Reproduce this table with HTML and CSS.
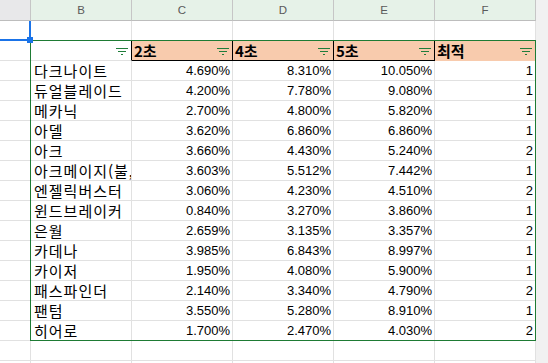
FILE: index.html
```
<!DOCTYPE html>
<html lang="ko">
<head>
<meta charset="utf-8">
<link rel="stylesheet" href="styles.css">
</head>
<body>
<div class="sheet">
  <div class="grid">
    <div class="c ch corner"></div>
    <div class="c ch">B</div>
    <div class="c ch">C</div>
    <div class="c ch">D</div>
    <div class="c ch">E</div>
    <div class="c ch">F</div>
    <div class="c strip"></div>

    <div class="c"></div><div class="c"></div><div class="c"></div><div class="c"></div><div class="c"></div><div class="c"></div><div class="c strip"></div>

    <div class="c"></div>
    <div class="c hd hb"><span></span><svg class="flt" width="12" height="7" viewBox="0 0 12 7"><rect x="0" y="0" width="12" height="1"/><rect x="2" y="3" width="8" height="1"/><rect x="5" y="6" width="2" height="1"/></svg></div>
    <div class="c hd hp"><span>2초</span><svg class="flt" width="12" height="7" viewBox="0 0 12 7"><rect x="0" y="0" width="12" height="1"/><rect x="2" y="3" width="8" height="1"/><rect x="5" y="6" width="2" height="1"/></svg></div>
    <div class="c hd hp"><span>4초</span><svg class="flt" width="12" height="7" viewBox="0 0 12 7"><rect x="0" y="0" width="12" height="1"/><rect x="2" y="3" width="8" height="1"/><rect x="5" y="6" width="2" height="1"/></svg></div>
    <div class="c hd hp"><span>5초</span><svg class="flt" width="12" height="7" viewBox="0 0 12 7"><rect x="0" y="0" width="12" height="1"/><rect x="2" y="3" width="8" height="1"/><rect x="5" y="6" width="2" height="1"/></svg></div>
    <div class="c hd hf"><span>최적</span><svg class="flt" width="12" height="7" viewBox="0 0 12 7"><rect x="0" y="0" width="12" height="1"/><rect x="2" y="3" width="8" height="1"/><rect x="5" y="6" width="2" height="1"/></svg></div>
    <div class="c strip"></div>

    <div class="c"></div><div class="c nm">다크나이트</div><div class="c n">4.690%</div><div class="c n">8.310%</div><div class="c n">10.050%</div><div class="c n">1</div><div class="c strip"></div>
    <div class="c"></div><div class="c nm">듀얼블레이드</div><div class="c n">4.200%</div><div class="c n">7.780%</div><div class="c n">9.080%</div><div class="c n">1</div><div class="c strip"></div>
    <div class="c"></div><div class="c nm">메카닉</div><div class="c n">2.700%</div><div class="c n">4.800%</div><div class="c n">5.820%</div><div class="c n">1</div><div class="c strip"></div>
    <div class="c"></div><div class="c nm">아델</div><div class="c n">3.620%</div><div class="c n">6.860%</div><div class="c n">6.860%</div><div class="c n">1</div><div class="c strip"></div>
    <div class="c"></div><div class="c nm">아크</div><div class="c n">3.660%</div><div class="c n">4.430%</div><div class="c n">5.240%</div><div class="c n">2</div><div class="c strip"></div>
    <div class="c"></div><div class="c nm">아크메이지(불,</div><div class="c n">3.603%</div><div class="c n">5.512%</div><div class="c n">7.442%</div><div class="c n">1</div><div class="c strip"></div>
    <div class="c"></div><div class="c nm">엔젤릭버스터</div><div class="c n">3.060%</div><div class="c n">4.230%</div><div class="c n">4.510%</div><div class="c n">2</div><div class="c strip"></div>
    <div class="c"></div><div class="c nm">윈드브레이커</div><div class="c n">0.840%</div><div class="c n">3.270%</div><div class="c n">3.860%</div><div class="c n">1</div><div class="c strip"></div>
    <div class="c"></div><div class="c nm">은월</div><div class="c n">2.659%</div><div class="c n">3.135%</div><div class="c n">3.357%</div><div class="c n">2</div><div class="c strip"></div>
    <div class="c"></div><div class="c nm">카데나</div><div class="c n">3.985%</div><div class="c n">6.843%</div><div class="c n">8.997%</div><div class="c n">1</div><div class="c strip"></div>
    <div class="c"></div><div class="c nm">카이저</div><div class="c n">1.950%</div><div class="c n">4.080%</div><div class="c n">5.900%</div><div class="c n">1</div><div class="c strip"></div>
    <div class="c"></div><div class="c nm">패스파인더</div><div class="c n">2.140%</div><div class="c n">3.340%</div><div class="c n">4.790%</div><div class="c n">2</div><div class="c strip"></div>
    <div class="c"></div><div class="c nm">팬텀</div><div class="c n">3.550%</div><div class="c n">5.280%</div><div class="c n">8.910%</div><div class="c n">1</div><div class="c strip"></div>
    <div class="c"></div><div class="c nm">히어로</div><div class="c n">1.700%</div><div class="c n">2.470%</div><div class="c n">4.030%</div><div class="c n">2</div><div class="c strip"></div>

    <div class="c"></div><div class="c"></div><div class="c"></div><div class="c"></div><div class="c"></div><div class="c"></div><div class="c strip"></div>
    <div class="c"></div><div class="c"></div><div class="c"></div><div class="c"></div><div class="c"></div><div class="c"></div><div class="c strip"></div>
  </div>
  <div class="frame"></div>
  <div class="sel"><div class="handle"></div></div>
</div>
</body>
</html>
```
FILE: styles.css
```
html, body {
  margin: 0;
  padding: 0;
  background: #ffffff;
  overflow: hidden;
  height: 363px;
}
.sheet {
  position: relative;
  width: 548px;
  height: 363px;
  overflow: hidden;
}
.grid {
  display: grid;
  grid-template-columns: 31px repeat(5, 101px) 1fr;
  grid-template-rows: 21px;
  grid-auto-rows: 20px;
  font-family: "Liberation Sans", Arial, sans-serif;
  font-size: 13px;
  color: #000;
}
.c {
  box-sizing: border-box;
  border-right: 1px solid #e1e1e1;
  border-bottom: 1px solid #e1e1e1;
  min-width: 0;
  overflow: hidden;
  white-space: nowrap;
}
.ch {
  background: #e6f2e8;
  border-right-color: #c6c6c6;
  border-bottom-color: #bdbdbd;
  color: #5a5a5a;
  font-size: 11.5px;
  text-align: center;
  line-height: 20px;
}
.ch.corner {
  background: #e8e8ea;
}
.strip {
  background: #f1f1f1;
  border-right: none;
  border-bottom: none;
}
.hd {
  display: flex;
  justify-content: space-between;
  font-family: "Noto Sans CJK KR", "Liberation Sans", sans-serif;
  font-weight: bold;
  font-size: 15px;
  line-height: 19px;
}
.hd span {
  padding-left: 2px;
}
.hb {
  border-right-color: #000;
}
.hp {
  background: #f8cbad;
  border-right-color: #000;
  border-bottom-color: #000;
}
.hf {
  background: #f8cbad;
  border-bottom-color: #f8cbad;
}
.flt {
  align-self: flex-end;
  margin: 0 3px 5px 0;
  fill: #1f7d3a;
  flex: none;
}
.nm {
  font-family: "Noto Sans CJK KR", sans-serif;
  font-size: 15px;
  line-height: 19px;
  padding-left: 3px;
  letter-spacing: 1px;
}
.n {
  text-align: right;
  line-height: 20px;
  padding-right: 2px;
}
.frame {
  position: absolute;
  left: 30px;
  top: 40px;
  width: 506px;
  height: 301px;
  box-sizing: border-box;
  border: 1px solid #1e7b34;
  pointer-events: none;
}
.sel {
  position: absolute;
  left: 0;
  top: 21px;
  width: 31px;
  height: 20px;
  box-sizing: border-box;
  border-right: 2px solid #1a73e8;
  border-bottom: 2px solid #1a73e8;
}
.handle {
  position: absolute;
  right: -4px;
  bottom: -4px;
  width: 6px;
  height: 6px;
  background: #1a73e8;
}
```
